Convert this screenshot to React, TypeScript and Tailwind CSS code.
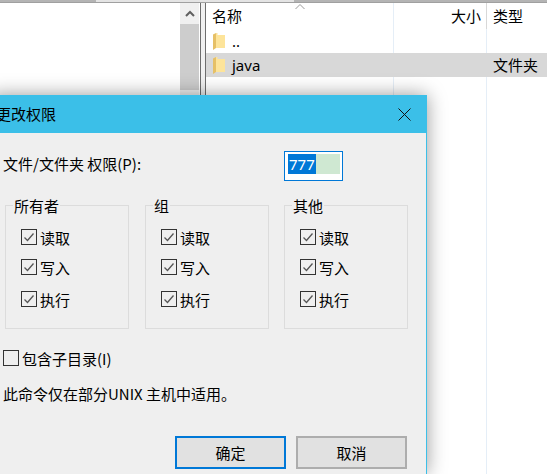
const font = "font-['Noto_Sans_CJK_SC','Liberation_Sans',sans-serif]"

function Folder() {
  return (
    <svg width="12" height="17" viewBox="0 0 12 17" className="shrink-0">
      <path d="M3 0 L4.5 0 L4.5 2 L12 2 L12 15 L3 15 Z" fill="#fde49a" />
      <path d="M0 1.5 L3 0 L3 15 L0 17 Z" fill="#e6c066" />
    </svg>
  )
}

function Check({ label, checked = true }: { label: string; checked?: boolean }) {
  return (
    <div className="flex items-center gap-[3px] h-[16px] text-[15px] text-black">
      <div className="w-[16px] h-[16px] border border-[#333] bg-[#efefef] flex items-center justify-center">
        {checked && (
          <svg width="12" height="12" viewBox="0 0 12 12">
            <path d="M1.5 6.5 L4.5 9.5 L10.5 2.5" fill="none" stroke="#555" strokeWidth="1.3" />
          </svg>
        )}
      </div>
      <span className="pt-[2px]">{label}</span>
    </div>
  )
}

function Group({ title }: { title: string }) {
  return (
    <div className="relative h-[124px] w-[124px] border border-[#dcdcdc] pl-[15px] pt-[23px]">
      <span className="absolute -top-[10px] left-[7px] bg-[#efefef] px-[1px] text-[15px] leading-[20px]">{title}</span>
      <div className="flex flex-col">
        <Check label="读取" />
        <div className="h-[14px]" />
        <Check label="写入" />
        <div className="h-[16px]" />
        <Check label="执行" />
      </div>
    </div>
  )
}

export default function App() {
  return (
    <div className={`relative w-[547px] h-[474px] overflow-hidden bg-white ${font}`}>
      {/* top sash */}
      <div className="flex h-[3px] border-b border-[#a0a0a0]">
        <div className="w-[96px] bg-[#b4b4b4]" />
        <div className="w-[198px] bg-[#e4e4e4]" />
        <div className="flex-1 bg-[#b4b4b4]" />
      </div>
      <div className="flex h-[471px]">
        {/* left tree pane */}
        <div className="w-[180px] bg-white" />
        <div className="w-[19px] bg-[#f0f0f0] flex flex-col">
          <div className="h-[21px] flex items-center justify-center">
            <svg width="10" height="7" viewBox="0 0 10 7">
              <path d="M1 6 L5 2 L9 6" fill="none" stroke="#606060" strokeWidth="2" />
            </svg>
          </div>
          <div className="h-[66px] bg-[#cdcdcd]" />
        </div>
        <div className="w-[1px] bg-white" />
        <div className="w-[1px] bg-[#6d6d6d]" />
        <div className="w-[4px] bg-[#f0f0f0]" />
        <div className="w-[1px] bg-[#6d6d6d]" />
        {/* right file list */}
        <div className="relative flex-1 text-[15px] text-black">
          <div className="flex h-[26px] items-center">
            <div className="w-[188px] pl-[6px] border-r border-[#e5eef7] h-full flex items-center">名称</div>
            <div className="w-[93px] pr-[5px] border-r border-[#d8d8d8] h-full flex items-center justify-end">大小</div>
            <div className="pl-[6px]">类型</div>
          </div>
          <svg width="10" height="6" viewBox="0 0 10 6" className="absolute left-[89px] top-[1px]">
            <path d="M0.5 5 L5 0.5 L9.5 5" fill="none" stroke="#9a9a9a" />
          </svg>
          <div className="flex h-[24px] items-center">
            <div className="w-[188px] pl-[7px] flex items-center gap-[7px] border-r border-[#e5eef7] h-full">
              <Folder />
              <span className="font-['Noto_Sans',sans-serif]">..</span>
            </div>
            <div className="w-[93px] border-r border-[#e5eef7] h-full" />
          </div>
          <div className="flex h-[24px] items-center bg-[#d8d8d8]">
            <div className="w-[188px] pl-[7px] flex items-center gap-[7px] h-full">
              <Folder />
              <span className="font-['Noto_Sans',sans-serif]">java</span>
            </div>
            <div className="w-[93px] h-full" />
            <div className="pl-[6px]">文件夹</div>
          </div>
          <div className="flex h-[397px]">
            <div className="w-[188px] border-r border-[#e5eef7]" />
            <div className="w-[93px] border-r border-[#e5eef7]" />
          </div>
        </div>
      </div>

      {/* dialog */}
      <div className="absolute left-[-10px] top-[95px] w-[437px] h-[379px] bg-[#efefef] border-r border-[#3cbfe8] shadow-[0_0_18px_rgba(0,0,0,0.4)] text-[15px] text-black">
        <div className="h-[38px] bg-[#3bbfe8] flex items-center justify-between pl-[6px] pr-[15px]">
          <span>更改权限</span>
          <svg width="13" height="13" viewBox="0 0 13 13">
            <path d="M0.5 0.5 L12.5 12.5 M12.5 0.5 L0.5 12.5" stroke="#111" strokeWidth="1" />
          </svg>
        </div>
        <div className="pl-[13px]">
          <div className="flex items-center h-[34px] mt-[14px] relative">
            <span>文件/文件夹 权限(P):</span>
            <div className="absolute left-[281px] top-[4px] w-[59px] h-[30px] border border-[#0078d7] bg-white pl-[3px] pt-[2px]">
              <div className="w-[52px] h-[20px] bg-[#cfe8d2] flex">
                <span className="bg-[#0078d7] text-white w-[28px] h-[20px] leading-[20px] pl-[1px] font-['Noto_Sans',sans-serif]">777</span>
              </div>
            </div>
          </div>
          <div className="flex mt-[24px] ml-[2px]">
            <Group title="所有者" />
            <div className="w-[16px]" />
            <Group title="组" />
            <div className="w-[15px]" />
            <Group title="其他" />
          </div>
          <div className="mt-[21px]">
            <Check label="包含子目录(I)" checked={false} />
          </div>
          <div className="mt-[18px] h-[20px] leading-[20px]">此命令仅在部分UNIX 主机中适用。</div>
          <div className="flex justify-end gap-[10px] mt-[32px] mr-[19px]">
            <button className="w-[111px] h-[33px] pt-[1px] border-2 border-[#0078d7] bg-[#e1e1e1]">确定</button>
            <button className="w-[111px] h-[33px] pt-[1px] border-2 border-[#adadad] bg-[#e1e1e1]">取消</button>
          </div>
        </div>
      </div>
    </div>
  )
}
